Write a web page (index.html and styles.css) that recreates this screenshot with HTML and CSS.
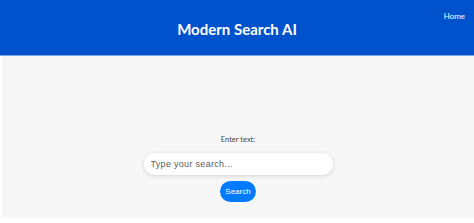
FILE: index.html
```html
<!DOCTYPE html>
<html lang="en">
<head>
  <link rel="stylesheet" href="styles.css">
</head>
<body>

<header class="topbar">
  <h1 class="title">Modern Search AI</h1>
  <nav class="nav"><a href="#">Home</a></nav>
</header>

<main class="main">
  <label class="label" for="q">Enter text:</label>
  <input class="search" id="q" type="text" placeholder="Type your search...">
  <button class="btn">Search</button>
</main>

</body>
</html>
```

FILE: styles.css
```css
body {
  margin: 0;
  background: #ffffff;
  font-family: Lato, 'Open Sans', sans-serif;
}

.topbar {
  position: relative;
  height: 55px;
  background: #0052cc;
  display: flex;
  align-items: center;
  justify-content: center;
  border-bottom: 1px solid #7aa7e8;
}

.title {
  margin: 0;
  color: #ffffff;
  font-size: 15px;
  font-weight: 700;
  padding-top: 2px;
}

.nav {
  position: absolute;
  top: 7px;
  right: 9px;
  line-height: 12px;
}

.nav a {
  color: #ffffff;
  font-size: 8px;
  text-decoration: none;
}

.main {
  margin-left: 2px;
  height: 84px;
  padding-top: 78px;
  background: #f7f7f7;
  display: flex;
  flex-direction: column;
  align-items: center;
}

.label {
  font-size: 7.5px;
  line-height: 12px;
  color: #444444;
}

.search {
  margin-top: 7px;
  width: 189px;
  height: 22px;
  box-sizing: border-box;
  border: none;
  border-radius: 11px;
  padding: 0 7px;
  background: #ffffff;
  box-shadow: 0 1px 4px rgba(0, 0, 0, 0.15);
  font-family: 'Liberation Sans', sans-serif;
  font-size: 9px;
  letter-spacing: 0.3px;
  color: #333333;
}

.search::placeholder {
  color: #5a5a5a;
}

.btn {
  margin-top: 6px;
  width: 36px;
  height: 21px;
  border: none;
  border-radius: 11px;
  background: #007bff;
  color: #ffffff;
  font-family: 'Liberation Sans', sans-serif;
  font-size: 8px;
  padding: 0;
}
```
